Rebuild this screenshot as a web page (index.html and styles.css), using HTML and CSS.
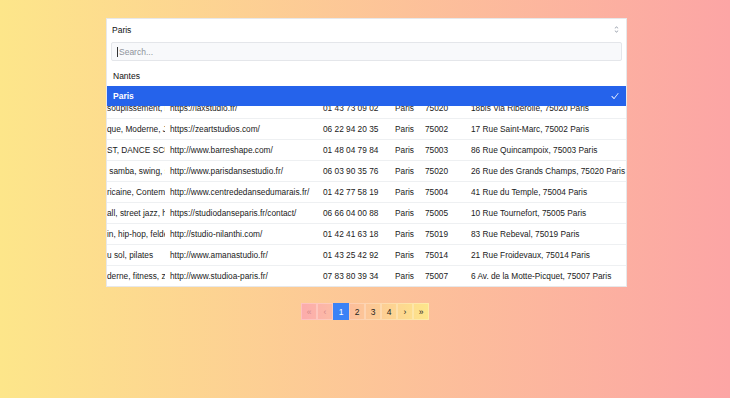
FILE: index.html
```html
<!DOCTYPE html>
<html>
<head>
<meta charset="utf-8">
<link rel="stylesheet" href="styles.css">
</head>
<body>

	<div class='card'>
		<button class='select'>
			<span>Paris</span>
			<svg class='select-icon' viewBox='0 0 20 20'><path fill='currentColor' d='M10 3a.75.75 0 01.55.24l3.25 3.5a.75.75 0 11-1.1 1.02L10 4.852 7.3 7.76a.75.75 0 01-1.1-1.02l3.25-3.5A.75.75 0 0110 3zm-3.76 9.2a.75.75 0 011.06.04l2.7 2.908 2.7-2.908a.75.75 0 111.1 1.02l-3.25 3.5a.75.75 0 01-1.1 0l-3.25-3.5a.75.75 0 01.04-1.06z'/></svg>
		</button>

		<!--
			Open listbox, lies over the top of the table
		-->
		<div class='listbox'>
			<div class='search-box'>
				<input class='search' type='text' placeholder='Search...' autofocus>
			</div>
			<ul class='options'>
				<li class='option'>Nantes</li>
				<li class='option selected'>
					<span>Paris</span>
					<svg class='check' viewBox='0 0 20 20'><path fill='currentColor' d='M16.704 4.153a.75.75 0 01.143 1.052l-8 10.5a.75.75 0 01-1.127.075l-4.5-4.5a.75.75 0 011.06-1.06l3.894 3.893 7.48-9.817a.75.75 0 011.05-.143z'/></svg>
				</li>
			</ul>
		</div>

		<div class='table-wrap'>
			<table class='studios'>
				<colgroup>
					<col style='width: 58px'>
					<col style='width: 153px'>
					<col style='width: 72px'>
					<col style='width: 30px'>
					<col style='width: 47px'>
					<col>
				</colgroup>
				<thead>
					<tr><th>Styles</th><th>Site</th><th>Téléphone</th><th>Ville</th><th>CP</th><th>Adresse</th></tr>
				</thead>
				<tbody>
					<tr><td>classique, jazz</td><td>https://www.studioharmonic.fr/</td><td>01 48 07 13 39</td><td>Paris</td><td>75011</td><td>5 Passage des Taillandiers, 75011 Paris</td></tr>
					<tr><td>tango, salsa</td><td>http://www.studio-bleu.com/</td><td>01 43 38 21 36</td><td>Paris</td><td>75011</td><td>7 Passage des Taillandiers, 75011 Paris</td></tr>
					<tr><td>souplissement, barre au sol</td><td>https://laxstudio.fr/</td><td>01 43 73 09 02</td><td>Paris</td><td>75020</td><td>18bis Via Riberolle, 75020 Paris</td></tr>
					<tr><td>que, Moderne, Jazz</td><td>https://zeartstudios.com/</td><td>06 22 94 20 35</td><td>Paris</td><td>75002</td><td>17 Rue Saint-Marc, 75002 Paris</td></tr>
					<tr><td>ST, DANCE SCULPT</td><td>http://www.barreshape.com/</td><td>01 48 04 79 84</td><td>Paris</td><td>75003</td><td>86 Rue Quincampoix, 75003 Paris</td></tr>
					<tr><td>&nbsp;samba, swing, salsa</td><td>http://www.parisdansestudio.fr/</td><td>06 03 90 35 76</td><td>Paris</td><td>75020</td><td>26 Rue des Grands Champs, 75020 Paris</td></tr>
					<tr><td>ricaine, Contemporain</td><td>http://www.centrededansedumarais.fr/</td><td>01 42 77 58 19</td><td>Paris</td><td>75004</td><td>41 Rue du Temple, 75004 Paris</td></tr>
					<tr><td>all, street jazz, hip-hop</td><td>https://studiodanseparis.fr/contact/</td><td>06 66 04 00 88</td><td>Paris</td><td>75005</td><td>10 Rue Tournefort, 75005 Paris</td></tr>
					<tr><td>in, hip-hop, feldenkrais</td><td>http://studio-nilanthi.com/</td><td>01 42 41 63 18</td><td>Paris</td><td>75019</td><td>83 Rue Rebeval, 75019 Paris</td></tr>
					<tr><td>u sol, pilates</td><td>http://www.amanastudio.fr/</td><td>01 43 25 42 92</td><td>Paris</td><td>75014</td><td>21 Rue Froidevaux, 75014 Paris</td></tr>
					<tr><td>derne, fitness, zumba</td><td>http://www.studioa-paris.fr/</td><td>07 83 80 39 34</td><td>Paris</td><td>75007</td><td>6 Av. de la Motte-Picquet, 75007 Paris</td></tr>
				</tbody>
			</table>
		</div>
	</div>

	<nav class='pager'>
		<span class='page disabled'>&laquo;</span>
		<span class='page disabled'>&lsaquo;</span>
		<span class='page current'>1</span>
		<span class='page'>2</span>
		<span class='page'>3</span>
		<span class='page'>4</span>
		<span class='page'>&rsaquo;</span>
		<span class='page'>&raquo;</span>
	</nav>

</body>
</html>
```

FILE: styles.css
```css
body
{
	margin: 0;
	padding: 18px 0 0;
	min-height: 398px;
	box-sizing: border-box;
	background: linear-gradient(to right, #fde68a, #fca5a5);
	font-family: "Liberation Sans", Arial, sans-serif;
	font-size: 8.3px;
	color: #1a1a1a;
}


/*
	Card
*/
.card
{
	position: relative;
	width: 521px;
	margin: 0 0 0 106px;
	background-color: white;
	border: solid 1px #e7e8ea;
	box-sizing: border-box;
}


/*
	Select button
*/
.select
{
	display: flex;
	align-items: center;
	justify-content: space-between;
	width: 100%;
	height: 21px;
	padding: 0 5px;
	margin: 0;
	border: 0;
	background-color: white;
	font: inherit;
	font-size: 8.5px;
	color: #111;
	text-align: left;
}
.select-icon
{
	width: 9px;
	height: 9px;
	color: #9ca3af;
}


/*
	Listbox
*/
.listbox
{
	position: absolute;
	top: 21px;
	left: -1px;
	right: -1px;
	padding-top: 2px;
	background-color: white;
	border-left: solid 1px #e7e8ea;
	border-right: solid 1px #e7e8ea;
	font-size: 8.5px;
	z-index: 2;
}
.search-box
{
	position: relative;
	margin: 0 4px;
}
.search-box::before
{
	content: '';
	position: absolute;
	left: 6px;
	top: 5px;
	width: 1px;
	height: 10px;
	background-color: #333;
}
.search
{
	display: block;
	box-sizing: border-box;
	width: 100%;
	height: 19px;
	margin: 0;
	padding: 0 7px;
	border: solid 1px #e4e6ea;
	border-radius: 2px;
	background-color: #f8f9fb;
	font: inherit;
	color: #111;
	outline: none;
	caret-color: transparent;
}
.search::placeholder
{
	color: #8e939b;
}
.options
{
	list-style: none;
	margin: 0;
	padding: 5px 0 0;
}
.option
{
	display: flex;
	align-items: center;
	justify-content: space-between;
	height: 20px;
	padding: 0 6px;
	color: #111;
}
.option.selected
{
	background-color: #2563eb;
	color: white;
	font-weight: bold;
}
.check
{
	width: 10px;
	height: 10px;
}


/*
	Table
*/
.table-wrap
{
	overflow: hidden;
}
.studios
{
	width: 100%;
	table-layout: fixed;
	border-collapse: separate;
	border-spacing: 0;
}
.studios th
{
	line-height: 15px;
	padding: 0 5px;
	text-align: left;
	font-weight: bold;
	border-bottom: solid 1px #eceef1;
}
.studios td
{
	line-height: 20px;
	padding: 0 5px;
	white-space: nowrap;
	overflow: hidden;
	border-bottom: solid 1px #eef0f2;
}
.studios tr:last-child td
{
	border-bottom: 0;
}
.studios td:first-child,
.studios th:first-child
{
	padding: 0 3px 0 0;
}
.studios td:last-child,
.studios th:last-child
{
	padding: 0 0 0 4px;
}


/*
	Pagination
*/
.pager
{
	display: flex;
	width: max-content;
	margin: 16px auto 0;
	background: linear-gradient(to right, #fca5a5, #fde68a);
	font-size: 8.5px;
}
.page
{
	width: 16px;
	height: 17px;
	line-height: 17px;
	text-align: center;
	box-sizing: border-box;
	border: solid 1px rgba(255, 255, 255, 0.25);
	color: #222;
}
.page.disabled
{
	color: #d48a8a;
	background-color: rgba(255, 255, 255, 0.08);
}
.page.current
{
	background-color: #3b82f6;
	border-color: #3b82f6;
	color: white;
}
```
